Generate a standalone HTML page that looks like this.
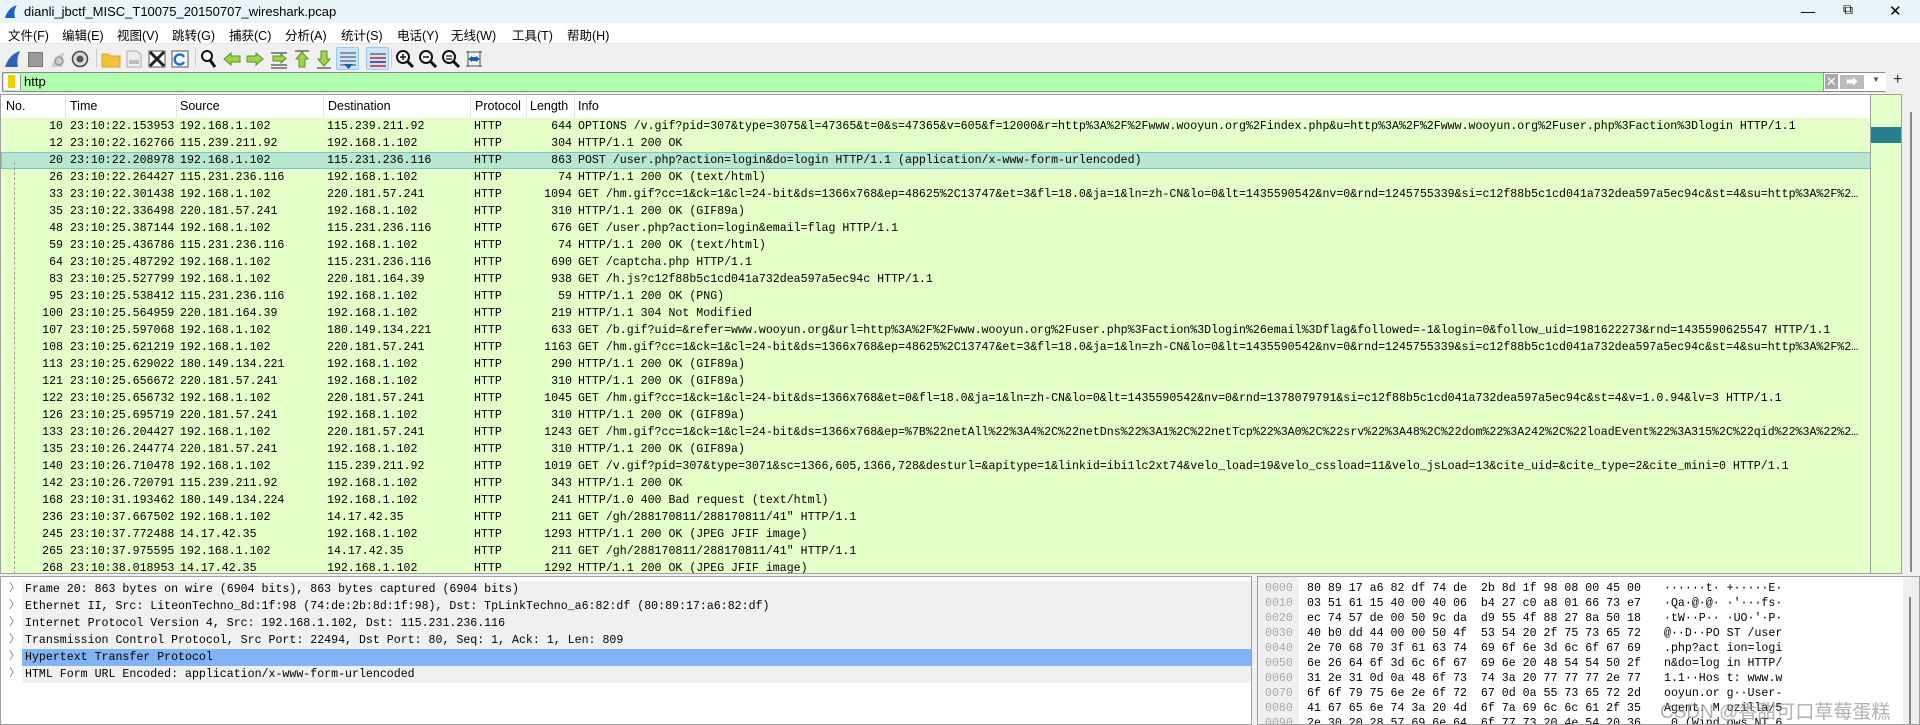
<!DOCTYPE html>
<html><head><meta charset="utf-8">
<style>
*{box-sizing:border-box;margin:0;padding:0}
body{width:1920px;height:725px;overflow:hidden;background:#f0f0f0;font-family:"Liberation Sans","Noto Sans CJK SC",sans-serif;position:relative}
.abs{position:absolute}
#title{left:0;top:0;width:1920px;height:23px;background:#e8f4f7;font-size:13px;color:#000}
#menu{left:0;top:23px;width:1920px;height:20px;background:#fff;font-size:12.5px}
#menu span{position:absolute;top:2px}
#tb{left:0;top:43px;width:1920px;height:28px;background:#f0f0f0;border-top:1px solid #e3e3e3}
.ic{position:absolute;top:5px;width:20px;height:20px}
#filter{left:2px;top:72px;width:1884px;height:20px;background:#afffaf;border:1px solid #8a8a8a;border-radius:2px}
.mono{font-family:"Liberation Mono","DejaVu Sans Mono",monospace;font-size:11.6px}
#list{left:0;top:94px;width:1870px;height:480px;background:#fff;border:1px solid #a0a0a0;border-right:none;overflow:hidden}
#hdr{position:absolute;left:0;top:0;width:1870px;height:23px;background:#fff;font-size:12.5px}
#hdr span{position:absolute;top:4px}
#hdr i{position:absolute;top:0;width:1px;height:23px;background:#e5e5e5}
.row{position:absolute;left:0;width:1870px;height:17px;background:#e4ffc7;white-space:nowrap;line-height:17px}
.row span{position:absolute;top:0}
.no{width:62px;text-align:right;left:0}
.tm{left:69px}.src{left:179px}.dst{left:326px}.pr{left:473px}
.ln{left:520px;width:51px;text-align:right}
.inf{left:577px;width:1282px;overflow:hidden;text-overflow:ellipsis}
.sel{background:#b7e7d0;outline:1px solid #79c5c9;outline-offset:-1px}
#det{left:0;top:576px;width:1252px;height:149px;background:#fff;border:1px solid #a0a0a0}
.dl{position:absolute;left:21px;width:1229px;height:17px;background:#f0f0f0;line-height:17px;padding-left:3px}
.car{position:absolute;left:-13px;top:0;color:#777;font-size:11px}
#hex{left:1257px;top:576px;width:663px;height:149px;background:#fff;border:1px solid #a0a0a0;overflow:hidden}
.hx{position:absolute;white-space:pre;line-height:15px}
</style></head><body>
<div id="title" class="abs">
<svg class="abs" style="left:4px;top:4px" width="15" height="15" viewBox="0 0 15 15"><path d="M1 14 C3 7 7 3 13 1 C10 5 10 10 11 14 Z" fill="#1565c0"/></svg>
<span class="abs" style="left:24px;top:4px">dianli_jbctf_MISC_T10075_20150707_wireshark.pcap</span>
<span class="abs" style="left:1801px;top:3px;font-size:14px">—</span>
<span class="abs" style="left:1843px;top:1px;font-size:14px">⧉</span>
<span class="abs" style="left:1889px;top:2px;font-size:15px">✕</span>
</div>
<div id="menu" class="abs">
<span style="left:8px">文件(F)</span><span style="left:62px">编辑(E)</span><span style="left:117px">视图(V)</span><span style="left:172px">跳转(G)</span><span style="left:229px">捕获(C)</span><span style="left:285px">分析(A)</span><span style="left:341px">统计(S)</span><span style="left:397px">电话(Y)</span><span style="left:451px">无线(W)</span><span style="left:512px">工具(T)</span><span style="left:567px">帮助(H)</span>
</div>
<div id="tb" class="abs">
<svg class="ic" style="left:3px" viewBox="0 0 20 20"><path d="M2 18 C5 9 10 4 17 2 C14 8 14 13 15 18 Z" fill="#2b63b8"/></svg>
<div class="ic" style="left:28px;top:8px;width:15px;height:15px;background:#9a9a9a;border:1px solid #777"></div>
<svg class="ic" style="left:48px" viewBox="0 0 20 20"><path d="M3 18 C6 9 11 5 17 3 C14 8 14 13 15 18 Z" fill="#ccc"/><circle cx="11" cy="12" r="4" fill="none" stroke="#999" stroke-width="1.5"/></svg>
<svg class="ic" style="left:70px" viewBox="0 0 20 20"><circle cx="10" cy="10" r="7.5" fill="#ddd" stroke="#444" stroke-width="1.5"/><circle cx="10" cy="10" r="3.5" fill="#555"/></svg>
<div class="abs" style="left:96px;top:5px;width:1px;height:18px;background:#ccc"></div>
<svg class="ic" style="left:101px" viewBox="0 0 20 20"><path d="M1 5 h6 l2 2 h10 v11 h-18z" fill="#f3c23c" stroke="#d9a21c"/></svg>
<svg class="ic" style="left:124px" viewBox="0 0 20 20"><path d="M3 2 h10 l4 4 v12 h-14z" fill="#eee" stroke="#aaa"/><rect x="5" y="11" width="10" height="4" fill="#bbb"/></svg>
<svg class="ic" style="left:147px" viewBox="0 0 20 20"><rect x="2" y="2" width="16" height="16" fill="#fff" stroke="#555"/><path d="M3 3 L17 17 M17 3 L3 17" stroke="#222" stroke-width="3"/></svg>
<svg class="ic" style="left:170px" viewBox="0 0 20 20"><rect x="2" y="2" width="16" height="16" fill="#fff" stroke="#555"/><path d="M14 8 A5 5 0 1 0 14 13" fill="none" stroke="#1d6fd1" stroke-width="2.5"/></svg>
<div class="abs" style="left:195px;top:5px;width:1px;height:18px;background:#ccc"></div>
<svg class="ic" style="left:199px" viewBox="0 0 20 20"><circle cx="8" cy="7" r="5" fill="#fff" stroke="#111" stroke-width="2"/><path d="M11 11 L16 18" stroke="#111" stroke-width="3"/></svg>
<svg class="ic" style="left:222px" viewBox="0 0 20 20"><path d="M2 10 L9 4 V7 H18 V13 H9 V16 Z" fill="#9ed34a" stroke="#5d8f1e"/></svg>
<svg class="ic" style="left:245px" viewBox="0 0 20 20"><path d="M18 10 L11 4 V7 H2 V13 H11 V16 Z" fill="#9ed34a" stroke="#5d8f1e"/></svg>
<svg class="ic" style="left:269px" viewBox="0 0 20 20"><path d="M2 4h16M2 16h16M2 19h16" stroke="#222"/><path d="M4 7h8v-2l5 4.5l-5 4.5v-2h-8z" fill="#9ed34a" stroke="#5d8f1e"/></svg>
<svg class="ic" style="left:292px" viewBox="0 0 20 20"><path d="M3 2h14" stroke="#222"/><path d="M10 3 L16 10 H13 V18 H7 V10 H4 Z" fill="#9ed34a" stroke="#5d8f1e"/></svg>
<svg class="ic" style="left:314px" viewBox="0 0 20 20"><path d="M3 19h14" stroke="#222"/><path d="M10 17 L16 10 H13 V2 H7 V10 H4 Z" fill="#9ed34a" stroke="#5d8f1e"/></svg>
<div class="abs" style="left:336px;top:3px;width:23px;height:23px;background:#cce4f7;border:1px solid #99c9ef;border-radius:2px"></div>
<svg class="ic" style="left:338px;top:6px" viewBox="0 0 20 20"><path d="M2 3h16M2 7h16M2 11h16M2 15h16" stroke="#444"/><path d="M6 14h9l-4.5 5z" fill="#1a5fb4"/></svg>
<div class="abs" style="left:366px;top:3px;width:23px;height:23px;background:#cce4f7;border:1px solid #99c9ef;border-radius:2px"></div>
<svg class="ic" style="left:368px;top:6px" viewBox="0 0 20 20"><path d="M2 4h16" stroke="#333"/><path d="M2 8h16" stroke="#c22" stroke-width="1.5"/><path d="M2 12h16" stroke="#2a2a8a" stroke-width="1.5"/><path d="M2 16h16" stroke="#c22" stroke-width="1.5"/></svg>
<div class="abs" style="left:391px;top:5px;width:1px;height:18px;background:#ccc"></div>
<svg class="ic" style="left:395px" viewBox="0 0 20 20"><circle cx="8" cy="8" r="6" fill="#fff" stroke="#111" stroke-width="2"/><path d="M12 12L18 18" stroke="#111" stroke-width="3"/><path d="M5 8h6M8 5v6" stroke="#111" stroke-width="1.5"/></svg>
<svg class="ic" style="left:418px" viewBox="0 0 20 20"><circle cx="8" cy="8" r="6" fill="#fff" stroke="#111" stroke-width="2"/><path d="M12 12L18 18" stroke="#111" stroke-width="3"/><path d="M5 8h6" stroke="#111" stroke-width="1.5"/></svg>
<svg class="ic" style="left:441px" viewBox="0 0 20 20"><circle cx="8" cy="8" r="6" fill="#fff" stroke="#111" stroke-width="2"/><path d="M12 12L18 18" stroke="#111" stroke-width="3"/><path d="M5 7h6M5 10h6" stroke="#111" stroke-width="1.2"/></svg>
<svg class="ic" style="left:464px" viewBox="0 0 20 20"><path d="M2 3h16M2 17h16M4 2v16M16 2v16" stroke="#555"/><path d="M4 10l4-3v6zM16 10l-4-3v6z" fill="#1a5fb4"/><rect x="8" y="8" width="4" height="4" fill="#1a5fb4"/></svg>
</div>
<div id="filter" class="abs">
<div class="abs" style="left:1px;top:1px;width:17px;height:16px;background:#fff;border-right:1px solid #999"></div>
<div class="abs" style="left:5px;top:2px;width:7px;height:13px;background:#f2cf00"></div>
<span class="abs" style="left:21px;top:1px;font-size:13px">http</span>
<div class="abs" style="left:1820px;top:0;width:63px;height:18px;background:#fff;border-left:1px solid #999"></div>
<div class="abs" style="left:1822px;top:1px;width:13px;height:15px;background:#a8a8a8;color:#fff;font-size:13px;line-height:15px;text-align:center">✕</div>
<div class="abs" style="left:1837px;top:2px;width:24px;height:14px;background:#bbb;color:#fff;font-size:12px;line-height:14px;text-align:center">➡</div>
<span class="abs" style="left:1869px;top:2px;font-size:8px;color:#555">▼</span>
</div>
<span class="abs" style="left:1893px;top:71px;font-size:16px;color:#333">+</span>
<div id="list" class="abs">
<div id="hdr"><span style="left:5px">No.</span><i style="left:64px"></i><span style="left:69px">Time</span><i style="left:175px"></i><span style="left:179px">Source</span><i style="left:322px"></i><span style="left:327px">Destination</span><i style="left:469px"></i><span style="left:474px">Protocol</span><i style="left:525px"></i><span style="left:529px">Length</span><i style="left:573px"></i><span style="left:577px">Info</span></div>
<div id="rows" class="mono"></div>
<div class="abs" style="left:13px;top:67px;width:1px;height:412px;border-left:1px dashed #999"></div>
</div>
<div class="abs" style="left:1870px;top:94px;width:32px;height:480px;background:#e4ffc7;border:1px solid #a0a0a0"></div>
<div class="abs" style="left:1871px;top:127px;width:30px;height:16px;background:#247f8e"></div>
<div class="abs" style="left:1902px;top:94px;width:18px;height:480px;background:#f0f0f0"></div>
<div class="abs" style="left:1910px;top:112px;width:2px;height:460px;background:#888"></div>
<div id="det" class="abs mono">
<div class="dl" style="top:4px"><span class="car">〉</span>Frame 20: 863 bytes on wire (6904 bits), 863 bytes captured (6904 bits)</div>
<div class="dl" style="top:21px"><span class="car">〉</span>Ethernet II, Src: LiteonTechno_8d:1f:98 (74:de:2b:8d:1f:98), Dst: TpLinkTechno_a6:82:df (80:89:17:a6:82:df)</div>
<div class="dl" style="top:38px"><span class="car">〉</span>Internet Protocol Version 4, Src: 192.168.1.102, Dst: 115.231.236.116</div>
<div class="dl" style="top:55px"><span class="car">〉</span>Transmission Control Protocol, Src Port: 22494, Dst Port: 80, Seq: 1, Ack: 1, Len: 809</div>
<div class="dl" style="top:72px;background:#80b4f4"><span class="car">〉</span>Hypertext Transfer Protocol</div>
<div class="dl" style="top:89px"><span class="car">〉</span>HTML Form URL Encoded: application/x-www-form-urlencoded</div>
</div>
<div id="hex" class="abs mono">
<div class="abs" style="left:0;top:0;width:41px;height:149px;background:#f0f0f0"></div>
<div class="hx" style="left:7px;top:4px;color:#a8a8a8">0000
0010
0020
0030
0040
0050
0060
0070
0080
0090</div>
<div class="hx" style="left:49px;top:4px">80 89 17 a6 82 df 74 de  2b 8d 1f 98 08 00 45 00
03 51 61 15 40 00 40 06  b4 27 c0 a8 01 66 73 e7
ec 74 57 de 00 50 9c da  d9 55 4f 88 27 8a 50 18
40 b0 dd 44 00 00 50 4f  53 54 20 2f 75 73 65 72
2e 70 68 70 3f 61 63 74  69 6f 6e 3d 6c 6f 67 69
6e 26 64 6f 3d 6c 6f 67  69 6e 20 48 54 54 50 2f
31 2e 31 0d 0a 48 6f 73  74 3a 20 77 77 77 2e 77
6f 6f 79 75 6e 2e 6f 72  67 0d 0a 55 73 65 72 2d
41 67 65 6e 74 3a 20 4d  6f 7a 69 6c 6c 61 2f 35
2e 30 20 28 57 69 6e 64  6f 77 73 20 4e 54 20 36</div>
<div class="hx" style="left:406px;top:4px">······t· +·····E·
·Qa·@·@· ·'···fs·
·tW··P·· ·UO·'·P·
@··D··PO ST /user
.php?act ion=logi
n&amp;do=log in HTTP/
1.1··Hos t: www.w
ooyun.or g··User-
Agent: M ozilla/5
.0 (Wind ows NT 6</div>
<div class="abs" style="left:645px;top:0;width:17px;height:149px;background:#f0f0f0"></div>
<div class="abs" style="left:651px;top:20px;width:2px;height:129px;background:#888"></div>
</div>
<div class="abs" style="left:1660px;top:697px;font-size:19px;color:rgba(150,150,150,0.75)">CSDN @香甜可口草莓蛋糕</div>
<script>
var R=[
[10,"23:10:22.153953","192.168.1.102","115.239.211.92",644,"OPTIONS /v.gif?pid=307&type=3075&l=47365&t=0&s=47365&v=605&f=12000&r=http%3A%2F%2Fwww.wooyun.org%2Findex.php&u=http%3A%2F%2Fwww.wooyun.org%2Fuser.php%3Faction%3Dlogin HTTP/1.1"],
[12,"23:10:22.162766","115.239.211.92","192.168.1.102",304,"HTTP/1.1 200 OK"],
[20,"23:10:22.208978","192.168.1.102","115.231.236.116",863,"POST /user.php?action=login&do=login HTTP/1.1  (application/x-www-form-urlencoded)"],
[26,"23:10:22.264427","115.231.236.116","192.168.1.102",74,"HTTP/1.1 200 OK  (text/html)"],
[33,"23:10:22.301438","192.168.1.102","220.181.57.241",1094,"GET /hm.gif?cc=1&ck=1&cl=24-bit&ds=1366x768&ep=48625%2C13747&et=3&fl=18.0&ja=1&ln=zh-CN&lo=0&lt=1435590542&nv=0&rnd=1245755339&si=c12f88b5c1cd041a732dea597a5ec94c&st=4&su=http%3A%2F%2Fwww.wooyun.org"],
[35,"23:10:22.336498","220.181.57.241","192.168.1.102",310,"HTTP/1.1 200 OK  (GIF89a)"],
[48,"23:10:25.387144","192.168.1.102","115.231.236.116",676,"GET /user.php?action=login&email=flag HTTP/1.1"],
[59,"23:10:25.436786","115.231.236.116","192.168.1.102",74,"HTTP/1.1 200 OK  (text/html)"],
[64,"23:10:25.487292","192.168.1.102","115.231.236.116",690,"GET /captcha.php HTTP/1.1"],
[83,"23:10:25.527799","192.168.1.102","220.181.164.39",938,"GET /h.js?c12f88b5c1cd041a732dea597a5ec94c HTTP/1.1"],
[95,"23:10:25.538412","115.231.236.116","192.168.1.102",59,"HTTP/1.1 200 OK  (PNG)"],
[100,"23:10:25.564959","220.181.164.39","192.168.1.102",219,"HTTP/1.1 304 Not Modified"],
[107,"23:10:25.597068","192.168.1.102","180.149.134.221",633,"GET /b.gif?uid=&refer=www.wooyun.org&url=http%3A%2F%2Fwww.wooyun.org%2Fuser.php%3Faction%3Dlogin%26email%3Dflag&followed=-1&login=0&follow_uid=1981622273&rnd=1435590625547 HTTP/1.1"],
[108,"23:10:25.621219","192.168.1.102","220.181.57.241",1163,"GET /hm.gif?cc=1&ck=1&cl=24-bit&ds=1366x768&ep=48625%2C13747&et=3&fl=18.0&ja=1&ln=zh-CN&lo=0&lt=1435590542&nv=0&rnd=1245755339&si=c12f88b5c1cd041a732dea597a5ec94c&st=4&su=http%3A%2F%2Fwww.wooyun.org"],
[113,"23:10:25.629022","180.149.134.221","192.168.1.102",290,"HTTP/1.1 200 OK  (GIF89a)"],
[121,"23:10:25.656672","220.181.57.241","192.168.1.102",310,"HTTP/1.1 200 OK  (GIF89a)"],
[122,"23:10:25.656732","192.168.1.102","220.181.57.241",1045,"GET /hm.gif?cc=1&ck=1&cl=24-bit&ds=1366x768&et=0&fl=18.0&ja=1&ln=zh-CN&lo=0&lt=1435590542&nv=0&rnd=1378079791&si=c12f88b5c1cd041a732dea597a5ec94c&st=4&v=1.0.94&lv=3 HTTP/1.1"],
[126,"23:10:25.695719","220.181.57.241","192.168.1.102",310,"HTTP/1.1 200 OK  (GIF89a)"],
[133,"23:10:26.204427","192.168.1.102","220.181.57.241",1243,"GET /hm.gif?cc=1&ck=1&cl=24-bit&ds=1366x768&ep=%7B%22netAll%22%3A4%2C%22netDns%22%3A1%2C%22netTcp%22%3A0%2C%22srv%22%3A48%2C%22dom%22%3A242%2C%22loadEvent%22%3A315%2C%22qid%22%3A%22%2C%22"],
[135,"23:10:26.244774","220.181.57.241","192.168.1.102",310,"HTTP/1.1 200 OK  (GIF89a)"],
[140,"23:10:26.710478","192.168.1.102","115.239.211.92",1019,"GET /v.gif?pid=307&type=3071&sc=1366,605,1366,728&desturl=&apitype=1&linkid=ibi1lc2xt74&velo_load=19&velo_cssload=11&velo_jsLoad=13&cite_uid=&cite_type=2&cite_mini=0 HTTP/1.1"],
[142,"23:10:26.720791","115.239.211.92","192.168.1.102",343,"HTTP/1.1 200 OK"],
[168,"23:10:31.193462","180.149.134.224","192.168.1.102",241,"HTTP/1.0 400 Bad request  (text/html)"],
[236,"23:10:37.667502","192.168.1.102","14.17.42.35",211,"GET /gh/288170811/288170811/41\" HTTP/1.1"],
[245,"23:10:37.772488","14.17.42.35","192.168.1.102",1293,"HTTP/1.1 200 OK  (JPEG JFIF image)"],
[265,"23:10:37.975595","192.168.1.102","14.17.42.35",211,"GET /gh/288170811/288170811/41\" HTTP/1.1"],
[268,"23:10:38.018953","14.17.42.35","192.168.1.102",1292,"HTTP/1.1 200 OK  (JPEG JFIF image)"]];
function e(s){return String(s).replace(/&/g,"&amp;").replace(/</g,"&lt;")}
var h="";R.forEach(function(r,i){h+='<div class="row'+(r[0]==20?' sel':'')+'" style="top:'+(23+i*17)+'px"><span class="no">'+r[0]+'</span><span class="tm">'+r[1]+'</span><span class="src">'+r[2]+'</span><span class="dst">'+r[3]+'</span><span class="pr">HTTP</span><span class="ln">'+r[4]+'</span><span class="inf">'+e(r[5])+'</span></div>'});
document.getElementById("rows").innerHTML=h;
</script>
</body></html>
